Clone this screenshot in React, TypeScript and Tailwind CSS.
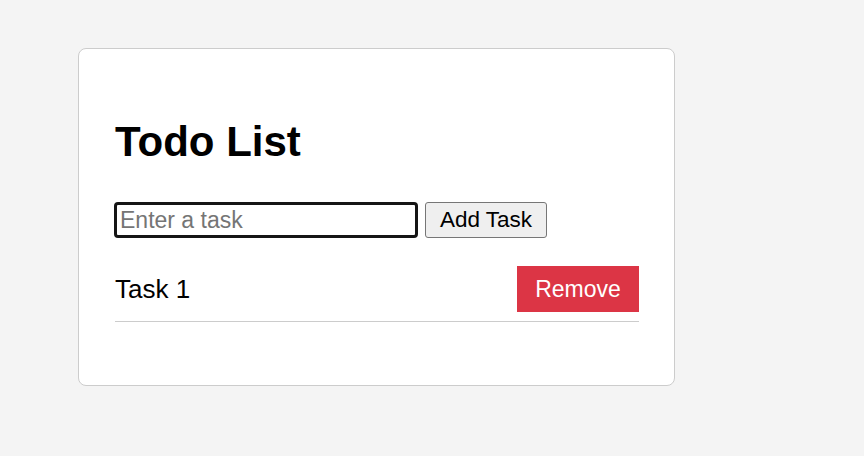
import { useState } from 'react';

// ── Todo list card ─────────────────────────────────────────────────────────

interface Task {
  id: number;
  text: string;
}

export default function App() {
  const [tasks, setTasks] = useState<Task[]>([{ id: 1, text: 'Task 1' }]);
  const [draft, setDraft] = useState('');

  function addTask() {
    const text = draft.trim();
    if (!text) return;
    setTasks((prev) => [...prev, { id: Date.now(), text }]);
    setDraft('');
  }

  function removeTask(id: number) {
    setTasks((prev) => prev.filter((t) => t.id !== id));
  }

  return (
    <div
      className="min-h-screen bg-[#f4f4f4] pt-[48px] pl-[78px]"
      style={{ fontFamily: '"Liberation Sans", Arial, sans-serif' }}
    >
      <div className="w-[597px] rounded-lg border border-[#cccccc] bg-white pl-[36px] pr-[35px] pt-[69px] pb-[63px]">
        <h1 className="mb-[36px] text-[42px] font-bold leading-[48px] text-black">Todo List</h1>

        {/* Input row */}
        <div className="-ml-px flex items-center gap-[7px]">
          <input
            value={draft}
            onChange={(e) => setDraft(e.target.value)}
            placeholder="Enter a task"
            className="h-[36px] w-[304px] rounded-[4px] border-[3px] border-[#151515] bg-white px-[3px] text-[23px] text-black outline-none placeholder:text-[#757575]"
          />
          <button
            onClick={addTask}
            className="h-[36px] w-[122px] rounded-[3px] border border-[#767676] bg-[#efefef] text-[22.5px] text-black"
          >
            Add Task
          </button>
        </div>

        {/* Task list */}
        <ul className="mt-[19px]">
          {tasks.map((task) => (
            <li
              key={task.id}
              className="flex items-center justify-between border-b border-[#cccccc] py-[9px]"
            >
              <span className="text-[26px] text-black">{task.text}</span>
              <button
                onClick={() => removeTask(task.id)}
                className="h-[46px] w-[122px] bg-[#dc3545] text-[23px] text-white"
              >
                Remove
              </button>
            </li>
          ))}
        </ul>
      </div>
    </div>
  );
}
